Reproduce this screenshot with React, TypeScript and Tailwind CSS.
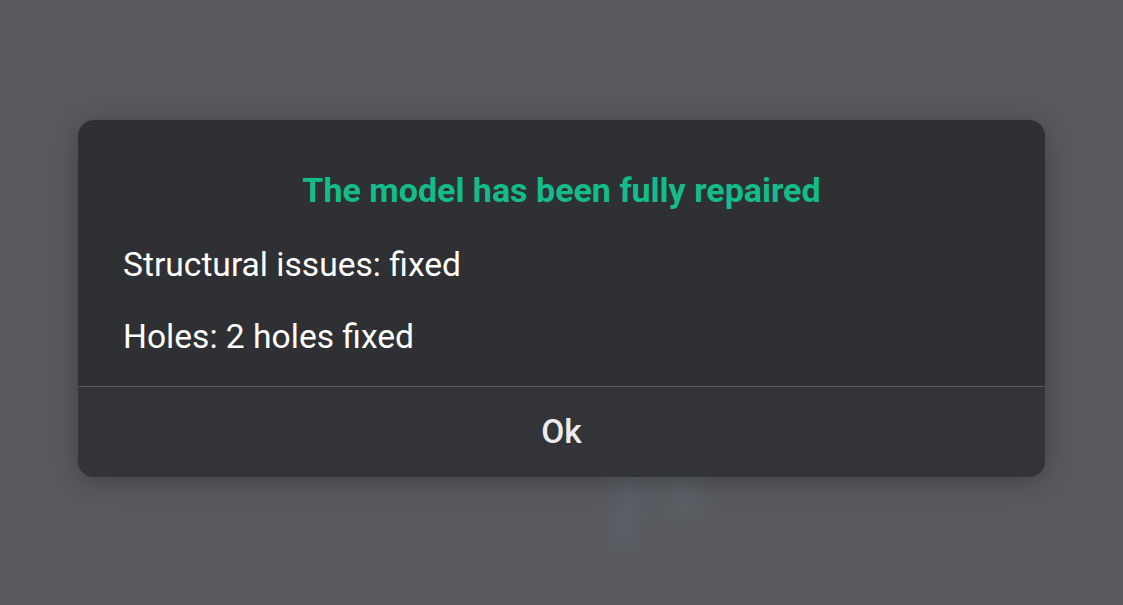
import React from "react";

export default function App() {
  return (
    <div
      className="relative w-[1123px] h-[605px] overflow-hidden bg-[#58595d] flex justify-center pt-[120px]"
      style={{ fontFamily: "Roboto, 'Noto Sans', Arial, sans-serif" }}
    >
      <div className="absolute left-[600px] top-[470px] w-[130px] h-[80px] blur-[10px] opacity-40 pointer-events-none">
        <div className="absolute left-[12px] top-[0px] w-[30px] h-[80px] bg-[#5b6a75] rounded-full rotate-[10deg]" />
        <div className="absolute left-[62px] top-[0px] w-[40px] h-[50px] bg-[#5b6b70] rounded-full -rotate-[30deg]" />
      </div>
      <div className="relative w-[967px] h-[357px] rounded-[16px] bg-[#2f3034] shadow-[0_4px_24px_rgba(0,0,0,0.25)] flex flex-col overflow-hidden">
        <div className="flex flex-col px-[45px] pt-[50px] pb-[29px]">
          <div className="h-[40px] leading-[40px] text-center text-[34px] font-bold text-[#12bd89]">
            The model has been fully repaired
          </div>
          <div className="mt-[35px] h-[40px] leading-[40px] text-[33.6px] text-white">
            Structural issues: fixed
          </div>
          <div className="mt-[32px] h-[40px] leading-[40px] text-[33.6px] text-white">
            Holes: 2 holes fixed
          </div>
        </div>
        <div className="h-px bg-[#5a5b5f]" />
        <div className="flex-1 bg-[#333438] flex items-center justify-center text-[33.5px] font-medium text-[#ececec]">
          Ok
        </div>
      </div>
    </div>
  );
}
